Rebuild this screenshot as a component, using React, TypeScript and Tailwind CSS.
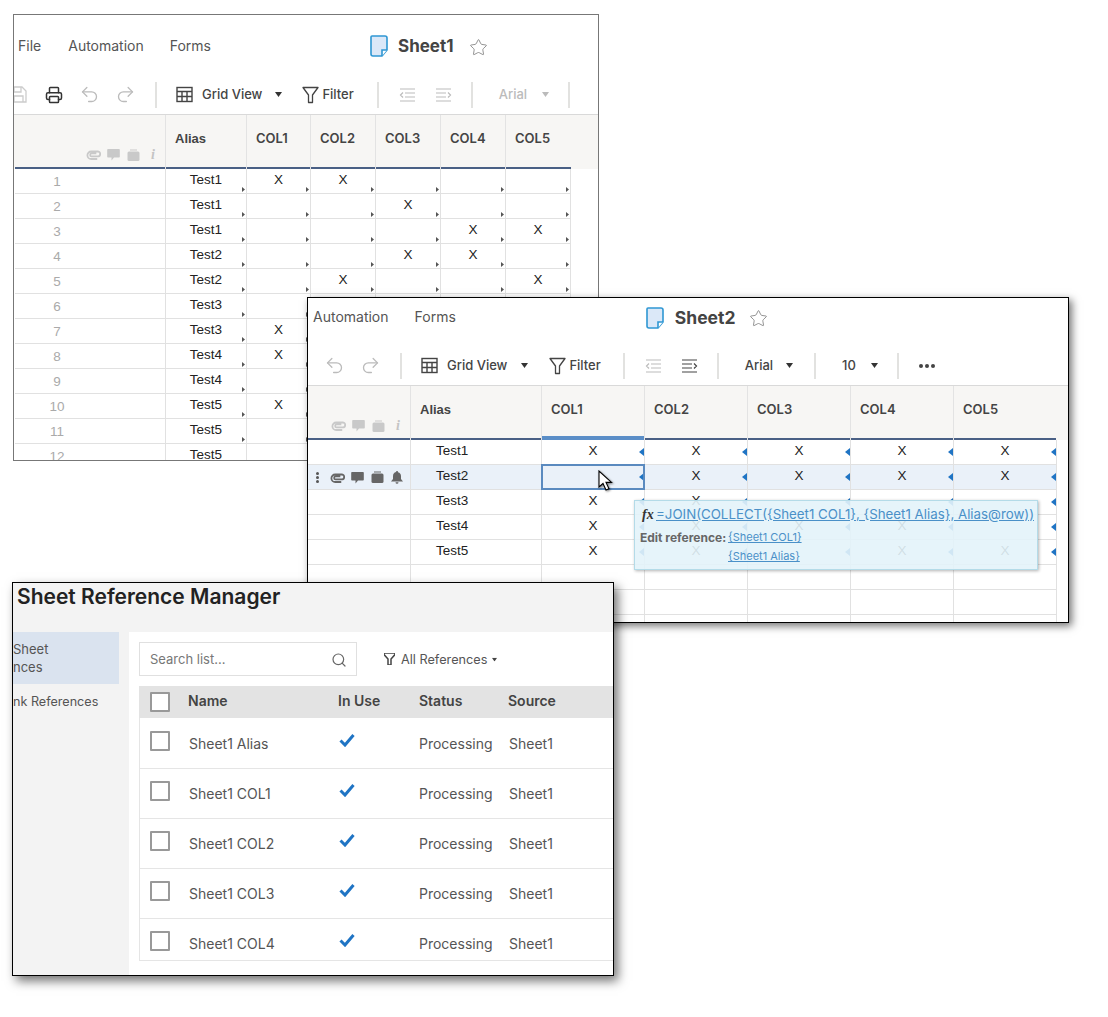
import React from "react";
import { Printer, Redo2, Search, Star, Undo2 } from "lucide-react";

const inter = "[font-family:Inter,sans-serif]";
const arial = "[font-family:'Liberation_Sans',Arial,sans-serif]";

function SheetIcon() {
    return (
        <svg width="18" height="22" viewBox="0 0 18 22" className="shrink-0">
            <path
                d="M2 1h13a2 2 0 0 1 2 2v12l-5 6H3a2 2 0 0 1-2-2V2a1 1 0 0 1 1-1z"
                fill="#dbe8f8"
                stroke="#2f97d3"
                strokeWidth="1.6"
            />
            <path d="M17 15h-5v6" fill="#fff" stroke="#2f97d3" strokeWidth="1.6" />
        </svg>
    );
}

function GridIcon() {
    return (
        <svg width="17" height="17" viewBox="0 0 17 17" fill="none" stroke="#444" strokeWidth="1.4" className="shrink-0">
            <rect x="1" y="1.5" width="15" height="14" />
            <path d="M1 5.5h15M1 10.5h15M6 5.5v10M11 5.5v10" />
        </svg>
    );
}

function FilterIcon() {
    return (
        <svg width="17" height="18" viewBox="0 0 17 18" fill="none" stroke="#444" strokeWidth="1.3" className="shrink-0">
            <path d="M1 1.500h15l-5.500 7.500v7.500h-4V9z" strokeLinejoin="round" />
        </svg>
    );
}

function IndentIcon({ out, color }: { out?: boolean; color: string }) {
    return (
        <svg width="17" height="14" viewBox="0 0 17 14" fill="none" stroke={color} strokeWidth="1.2" className="shrink-0">
            <path d="M1 1h15M1 13h15" />
            {out ? <path d="M16 5H6M16 9H6M4 4.500 1.500 7 4 9.500" /> : <path d="M1 5h10M1 9h10M13 4.500 15.500 7 13 9.500" />}
        </svg>
    );
}

function Caret({ className }: { className: string }) {
    return (
        <svg width="7" height="5" viewBox="0 0 7 5" className={"shrink-0 " + className}>
            <path d="M0 0h7L3.500 5z" fill="currentColor" />
        </svg>
    );
}

function Divider({ ml }: { ml: string }) {
    return <div className={"h-[26px] w-[2px] shrink-0 bg-[#e2e2e0] " + ml} />;
}

function ClipIcon({ color }: { color: string }) {
    return (
        <svg width="15" height="13" viewBox="0 0 16 12" fill="none" stroke={color} strokeWidth="1.9" className="shrink-0">
            <path d="M11 4.800H6a1.600 1.600 0 0 0 0 3.200h6.500a2.600 2.600 0 0 0 0-5.200H5.500a4 4 0 0 0 0 8H12" />
        </svg>
    );
}

function CommentIcon({ color }: { color: string }) {
    return (
        <svg width="13" height="13" viewBox="0 0 13 13" className="shrink-0">
            <path d="M1 1h11a.8.8 0 0 1 .8.8v7a.8.8 0 0 1-.8.8H7l-2.500 3V9.600H1a.8.8 0 0 1-.8-.8v-7A.8.8 0 0 1 1 1z" fill={color} />
        </svg>
    );
}

function CaseIcon({ color }: { color: string }) {
    return (
        <svg width="13" height="12" viewBox="0 0 13 12" className="shrink-0">
            <path d="M3 0.500h7v1H3z" fill={color} />
            <rect x="0.500" y="2.500" width="12" height="9.500" rx="1.500" fill={color} />
        </svg>
    );
}

function BellIcon({ color }: { color: string }) {
    return (
        <svg width="12" height="13" viewBox="0 0 12 13" className="shrink-0">
            <path d="M6 0a1 1 0 0 1 1 1.200c2 .5 3 2 3 4V8l2 2.400H0L2 8V5.200c0-2.200 1-3.700 3-4.100A1 1 0 0 1 6 0zM4.500 11.200h3a1.500 1.500 0 0 1-3 0z" fill={color} />
        </svg>
    );
}

function InfoMark() {
    return <span className="ml-[5px] w-[9px] text-[14px] leading-[12px] italic text-[#c4c4c4] [font-family:'Liberation_Serif',serif]">i</span>;
}

function HeaderIcons() {
    const c = "#c9c9c9";
    return (
        <div className="flex items-center gap-[6px]">
            <ClipIcon color={c} />
            <CommentIcon color={c} />
            <span className="ml-[1px]">
                <CaseIcon color={c} />
            </span>
            <InfoMark />
        </div>
    );
}

function Triangle({ blue }: { blue?: boolean }) {
    if (blue) {
        return (
            <svg width="5" height="8" viewBox="0 0 5 8" className="absolute right-0 top-[8px]">
                <path d="M5 0v8L0 4z" fill="#1f74c4" />
            </svg>
        );
    }
    return (
        <svg width="3" height="5" viewBox="0 0 3 5" className="absolute bottom-[1px] right-[1px]">
            <path d="M0 0v5l3-2.500z" fill="#555" />
        </svg>
    );
}

const sheet1Rows = [
    ["Test1", "X", "X", "", "", ""],
    ["Test1", "", "", "X", "", ""],
    ["Test1", "", "", "", "X", "X"],
    ["Test2", "", "", "X", "X", ""],
    ["Test2", "", "X", "", "", "X"],
    ["Test3", "", "", "", "", ""],
    ["Test3", "X", "", "", "", ""],
    ["Test4", "X", "", "", "", ""],
    ["Test4", "", "", "", "", ""],
    ["Test5", "X", "", "", "", ""],
    ["Test5", "", "", "", "", ""],
    ["Test5", "", "", "", "", ""],
];

const sheet2Rows = [
    ["Test1", "X", "X", "X", "X", "X"],
    ["Test2", "", "X", "X", "X", "X"],
    ["Test3", "X", "X", "", "", ""],
    ["Test4", "X", "X", "X", "X", ""],
    ["Test5", "X", "X", "", "X", "X"],
    ["", "", "", "", "", ""],
    ["", "", "", "", "", ""],
    ["", "", "", "", "", ""],
];

const cols = ["COL1", "COL2", "COL3", "COL4", "COL5"];

function Sheet1() {
    return (
        <div className="absolute left-[13px] top-[14px] h-[447px] w-[586px] overflow-hidden border border-[#777] bg-white">
            <div className={"flex h-[62px] items-center text-[14px] text-[#555] " + inter}>
                <span className="ml-[4px] -mt-[2px]">File</span>
                <span className="ml-[27px] -mt-[2px]">Automation</span>
                <span className="ml-[26px] -mt-[2px]">Forms</span>
                <span className="ml-[159px]">
                    <SheetIcon />
                </span>
                <span className="ml-[10px] mt-[2px] text-[17px] font-bold text-[#444]">Sheet1</span>
                <Star size={19} strokeWidth={1} className="ml-[15px] mt-[2px] text-[#777]" />
            </div>
            <div className={"flex h-[38px] items-center border-b border-[#d9d9d9] pb-[2px] text-[13px] font-medium text-[#444] " + inter}>
                <svg width="17" height="17" viewBox="0 0 17 17" fill="none" stroke="#ccc" strokeWidth="1.3" className="-ml-[4px] shrink-0">
                    <path d="M1 1h11l4 4v11H1zM4 1v5h7V1M4 16v-6h9v6" />
                </svg>
                <Printer size={18} strokeWidth={2} className="ml-[18px] text-[#333]" />
                <Undo2 size={21} strokeWidth={1.5} className="ml-[16px] text-[#bbb]" />
                <Redo2 size={21} strokeWidth={1.5} className="ml-[15px] text-[#bbb]" />
                <Divider ml="ml-[19px]" />
                <span className="ml-[19px]">
                    <GridIcon />
                </span>
                <span className="ml-[9px]">Grid View</span>
                <Caret className="ml-[13px] text-[#333]" />
                <span className="ml-[20px]">
                    <FilterIcon />
                </span>
                <span className="ml-[3px]">Filter</span>
                <Divider ml="ml-[23px]" />
                <span className="ml-[20px]">
                    <IndentIcon out color="#bbb" />
                </span>
                <span className="ml-[19px]">
                    <IndentIcon color="#bbb" />
                </span>
                <Divider ml="ml-[19px]" />
                <span className="ml-[26px] text-[#bbb]">Arial</span>
                <Caret className="ml-[15px] text-[#bbb]" />
                <Divider ml="ml-[19px]" />
            </div>
            <div className={"grid h-[54px] grid-cols-[152px_81px_64px_65px_65px_65px_65px_1fr] bg-[#f7f6f4] text-[13px] font-semibold text-[#444] " + inter}>
                <div className="flex items-end justify-end border-r border-[#e3e3e3] pb-[8px] pr-[5px]">
                    <HeaderIcons />
                </div>
                <div className={"border-r border-[#e3e3e3] pl-[9px] pt-[14px] font-bold " + arial}>Alias</div>
                {cols.map((c, i) => (
                    <div key={c} className={"pl-[9px] pt-[14px] " + (i < 4 ? "border-r border-[#e3e3e3]" : "")}>
                        {c}
                    </div>
                ))}
                <div />
            </div>
            <div className="-mt-[2px] ml-[1px] h-[2px] w-[556px] bg-[#4a6085]" />
            {sheet1Rows.map((r, i) => (
                <div key={i} className={"grid h-[25px] w-[557px] grid-cols-[152px_81px_64px_65px_65px_65px_65px] text-[13.5px] text-[#222] " + arial}>
                    <div className="ml-[1px] flex border-b border-r border-[#e1e1e1] pt-[3px] text-[#aaa]">
                        <span className="w-[84px] text-center">{i + 1}</span>
                    </div>
                    {r.map((v, j) => (
                        <div key={j} className="relative border-b border-r border-[#e1e1e1] pt-[1px] text-center">
                            {v}
                            <Triangle />
                        </div>
                    ))}
                </div>
            ))}
        </div>
    );
}

function Sheet2() {
    return (
        <div className="absolute left-[307px] top-[297px] h-[326px] w-[762px] overflow-hidden border border-black bg-white shadow-[3px_3px_8px_rgba(0,0,0,0.55)]">
            <div className={"flex h-[38px] items-center text-[14px] text-[#555] " + inter}>
                <span className="ml-[5px] -mt-[2px]">Automation</span>
                <span className="ml-[26px] -mt-[2px]">Forms</span>
                <span className="ml-[190px] mt-[2px]">
                    <SheetIcon />
                </span>
                <span className="ml-[11px] mt-[2px] text-[17.5px] font-bold text-[#444]">Sheet2</span>
                <Star size={19} strokeWidth={1} className="ml-[14px] mt-[2px] text-[#777]" />
            </div>
            <div className={"flex h-[50px] items-center border-b border-[#d9d9d9] pt-[10px] text-[13px] font-medium text-[#444] " + inter}>
                <Undo2 size={21} strokeWidth={1.5} className="ml-[16px] text-[#bbb]" />
                <Redo2 size={21} strokeWidth={1.5} className="ml-[15px] text-[#bbb]" />
                <Divider ml="ml-[19px]" />
                <span className="ml-[19px]">
                    <GridIcon />
                </span>
                <span className="ml-[9px]">Grid View</span>
                <Caret className="ml-[14px] text-[#333]" />
                <span className="ml-[21px]">
                    <FilterIcon />
                </span>
                <span className="ml-[3px]">Filter</span>
                <Divider ml="ml-[22px]" />
                <span className="ml-[20px]">
                    <IndentIcon out color="#bbb" />
                </span>
                <span className="ml-[19px]">
                    <IndentIcon color="#444" />
                </span>
                <Divider ml="ml-[19px]" />
                <span className="ml-[26px]">Arial</span>
                <Caret className="ml-[13px] text-[#333]" />
                <Divider ml="ml-[21px]" />
                <span className="ml-[26px]">10</span>
                <Caret className="ml-[15px] text-[#333]" />
                <Divider ml="ml-[19px]" />
                <span className="ml-[20px] flex gap-[2px]">
                    <span className="size-[4px] rounded-full bg-[#444]" />
                    <span className="size-[4px] rounded-full bg-[#444]" />
                    <span className="size-[4px] rounded-full bg-[#444]" />
                </span>
            </div>
            <div className={"grid h-[54px] grid-cols-[103px_131px_103px_103px_103px_103px_103px_1fr] bg-[#f7f6f4] text-[13px] font-semibold text-[#444] " + inter}>
                <div className="flex items-end justify-end border-r border-[#e3e3e3] pb-[8px] pr-[5px]">
                    <HeaderIcons />
                </div>
                <div className={"border-r border-[#e3e3e3] pl-[9px] pt-[14px] font-bold " + arial}>Alias</div>
                {cols.map((c, i) => (
                    <div key={c} className={"relative pl-[9px] pt-[14px] " + (i < 4 ? "border-r border-[#e3e3e3]" : "")}>
                        {c}
                        {i === 0 && <div className="absolute inset-x-0 bottom-0 h-[4px] bg-[#5b8ec7]" />}
                    </div>
                ))}
                <div />
            </div>
            <div className="-mt-[2px] h-[2px] w-[748px] bg-[#4a6085]" />
            {sheet2Rows.map((r, i) => (
                <div
                    key={i}
                    className={
                        "grid h-[25px] w-[748px] grid-cols-[103px_131px_103px_103px_103px_103px_103px] text-[13.5px] text-[#222] " +
                        arial +
                        (i === 1 ? " bg-[#eaf1f9]" : "")
                    }
                >
                    <div className="flex items-center gap-[6px] border-b border-r border-[#e1e1e1] pl-[8px]">
                        {i === 1 && (
                            <>
                                <span className="mr-[5px] flex w-[3px] flex-col gap-[1px]">
                                    <span className="size-[3px] rounded-full bg-[#555]" />
                                    <span className="size-[3px] rounded-full bg-[#555]" />
                                    <span className="size-[3px] rounded-full bg-[#555]" />
                                </span>
                                <ClipIcon color="#666" />
                                <CommentIcon color="#666" />
                                <span className="ml-[1px]">
                                    <CaseIcon color="#666" />
                                </span>
                                <span className="ml-[1px]">
                                    <BellIcon color="#666" />
                                </span>
                            </>
                        )}
                    </div>
                    {r.map((v, j) => (
                        <div
                            key={j}
                            className={
                                "relative border-b border-r border-[#e1e1e1] pt-[1px] " +
                                (j === 0 ? "pl-[25px] text-left" : "text-center")
                            }
                        >
                            {v}
                            {j > 0 && i < 5 && <Triangle blue />}
                            {j === 1 && i === 1 && (
                                <div className="absolute -inset-x-px -top-px bottom-[-1px] border-2 border-[#5a8abf]" />
                            )}
                            {j === 1 && i === 1 && (
                                <svg width="16" height="24" viewBox="0 0 16 24" className="absolute left-[56px] top-[5px] drop-shadow-[1px_1px_1px_rgba(0,0,0,0.5)]">
                                    <path d="M1 1v16l4-3.500 3 6.500 3-1.300-3-6.300h5.500z" fill="#fff" stroke="#000" strokeWidth="1.100" />
                                </svg>
                            )}
                        </div>
                    ))}
                </div>
            ))}
            <div className={"absolute left-[326px] top-[202px] h-[70px] w-[404px] border border-[#b4dbe8] bg-[#e3f3f9]/90 shadow-[1px_1px_3px_rgba(0,0,0,0.3)] " + inter}>
                <div className="flex h-[27px] items-center pl-[7px]">
                    <span className="mr-[2px] w-[12px] text-[14px] font-bold italic text-[#333] [font-family:'Liberation_Serif',serif]">fx</span>
                    <span className="text-[13.3px] whitespace-nowrap text-[#4a90c8] underline">{"=JOIN(COLLECT({Sheet1 COL1}, {Sheet1 Alias}, Alias@row))"}</span>
                </div>
                <div className="flex pl-[5px]">
                    <span className="w-[88px] text-[12px] font-bold leading-[19px] text-[#666]">Edit reference:</span>
                    <div className="flex flex-col gap-px text-[11px] leading-[18px] text-[#4a90c8] underline">
                        <span>{"{Sheet1 COL1}"}</span>
                        <span>{"{Sheet1 Alias}"}</span>
                    </div>
                </div>
            </div>
        </div>
    );
}

const refs = ["Sheet1 Alias", "Sheet1 COL1", "Sheet1 COL2", "Sheet1 COL3", "Sheet1 COL4"];

function Checkbox() {
    return <div className="size-[20px] rounded-[1px] border-2 border-[#999] bg-white" />;
}

function Manager() {
    return (
        <div className={"absolute left-[12px] top-[582px] flex h-[394px] w-[602px] flex-col overflow-hidden border border-black bg-[#f3f3f3] text-[14px] text-[#555] shadow-[4px_5px_10px_rgba(0,0,0,0.55)] " + inter}>
            <div className="h-[49px] shrink-0 pl-[4px] pt-[1px] text-[21px] leading-[26px] font-semibold text-[#222]">Sheet Reference Manager</div>
            <div className="flex min-h-0 flex-1">
                <div className="w-[116px] shrink-0">
                    <div className="h-[52px] w-[106px] bg-[#dae3ef] pt-[8px] text-[13px] leading-[18px]">
                        <div>Sheet</div>
                        <div>nces</div>
                    </div>
                    <div className="pt-[9px] text-[12.6px] leading-[18px]">nk References</div>
                </div>
                <div className="min-w-0 flex-1 bg-white pl-[10px] pt-[10px]">
                    <div className="flex items-center">
                        <div className="flex h-[34px] w-[218px] items-center border border-[#e0e0e0] pl-[10px] pr-[9px] pt-[1px] text-[13px] text-[#777]">
                            <span className="flex-1">Search list...</span>
                            <Search size={16} strokeWidth={1.8} className="text-[#666]" />
                        </div>
                        <svg width="11" height="12" viewBox="0 0 11 12" className="ml-[27px]">
                            <path d="M0 0h11v1.500L7 6v6H4V6L0 1.500z" fill="none" stroke="#444" strokeWidth="1.500" />
                        </svg>
                        <span className="ml-[6px] mt-[2px] text-[12.7px]">All References</span>
                        <Caret className="ml-[4px] scale-75 text-[#444]" />
                    </div>
                    <div className="mt-[10px] grid h-[32px] grid-cols-[49px_150px_81px_89px_1fr] items-center bg-[#e3e3e3] pb-[3px] font-semibold text-[#444]">
                        <div className="pl-[11px] pt-[3px]">
                            <Checkbox />
                        </div>
                        <div>Name</div>
                        <div>In Use</div>
                        <div>Status</div>
                        <div>Source</div>
                    </div>
                    <div className="border-l border-[#e5e5e5] pt-[1px]">
                        {refs.map((name, i) => (
                            <div key={name} className={"grid grid-cols-[48px_150px_81px_89px_1fr] border-b border-[#e5e5e5] " + (i === 4 ? "h-[42px]" : "h-[50px]")}>
                                <div className="pl-[10px] pt-[12px]">
                                    <Checkbox />
                                </div>
                                <div className="pl-[1px] pt-[14px]">{name}</div>
                                <div className="pl-[1px] pt-[14px]">
                                    <svg width="16" height="14" viewBox="0 0 16 14">
                                        <path d="M1.500 7.500 6 12 14.500 2" fill="none" stroke="#1f74c4" strokeWidth="3" />
                                    </svg>
                                </div>
                                <div className="pt-[14px]">Processing</div>
                                <div className="pl-[1px] pt-[14px]">Sheet1</div>
                            </div>
                        ))}
                    </div>
                </div>
            </div>
        </div>
    );
}

export default function App() {
    return (
        <div className="relative h-[1017px] w-[1108px] overflow-hidden bg-white">
            <Sheet1 />
            <Sheet2 />
            <Manager />
        </div>
    );
}
